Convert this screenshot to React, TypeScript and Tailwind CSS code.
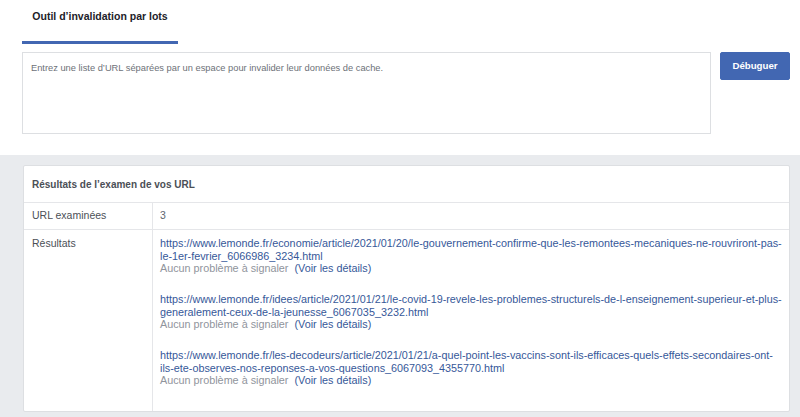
import React from "react"

const results = [
  {
    url: "https://www.lemonde.fr/economie/article/2021/01/20/le-gouvernement-confirme-que-les-remontees-mecaniques-ne-rouvriront-pas-le-1er-fevrier_6066986_3234.html",
  },
  {
    url: "https://www.lemonde.fr/idees/article/2021/01/21/le-covid-19-revele-les-problemes-structurels-de-l-enseignement-superieur-et-plus-generalement-ceux-de-la-jeunesse_6067035_3232.html",
  },
  {
    url: "https://www.lemonde.fr/les-decodeurs/article/2021/01/21/a-quel-point-les-vaccins-sont-ils-efficaces-quels-effets-secondaires-ont-ils-ete-observes-nos-reponses-a-vos-questions_6067093_4355770.html",
  },
]

export default function App() {
  return (
    <div className="min-h-[417px] bg-[#e9ebee] font-['Liberation_Sans',Arial,sans-serif] text-[10px]">
      {/* top tool */}
      <section className="h-[155px] bg-white">
        <div className="ml-[22px] w-[156px] h-[44px] border-b-[3px] border-[#4267b2] flex items-center justify-center pb-[7px]">
          <span className="text-[10.5px] font-bold text-[#1d2129]">Outil d’invalidation par lots</span>
        </div>
        <div className="flex items-start ml-[22px] mr-[10px] mt-[8px] gap-[9px]">
          <textarea
            className="w-[689px] h-[82px] border border-[#dddfe2] px-[8px] pt-[9px] text-[9.3px] leading-[12px] text-[#1d2129] placeholder:text-[#6d7178] resize-none outline-none"
            placeholder="Entrez une liste d’URL séparées par un espace pour invalider leur données de cache."
          />
          <button className="w-[70px] h-[28px] bg-[#4267b2] rounded-[2px] text-white font-bold text-[9.7px] border border-[#4267b2]">
            Débuguer
          </button>
        </div>
      </section>

      {/* results card */}
      <div className="pt-[10px] pb-[7px] pl-[23px] pr-[10px]">
        <div className="bg-white border border-[#dddfe2] rounded-[2px]">
          <div className="h-[37px] flex items-center px-[8px] border-b border-[#e5e6e9]">
            <span className="text-[10px] font-bold text-[#4b4f56]">Résultats de l’examen de vos URL</span>
          </div>
          <div className="flex h-[27px] border-b border-[#e5e6e9] text-[10.5px] text-[#4b4f56]">
            <div className="w-[129px] shrink-0 border-r border-[#e5e6e9] px-[8px] flex items-center">URL examinées</div>
            <div className="px-[7px] flex items-center text-[#606770]">3</div>
          </div>
          <div className="flex text-[10.8px]">
            <div className="w-[129px] shrink-0 border-r border-[#e5e6e9] px-[8px] pt-[7px] text-[10.5px] text-[#4b4f56] leading-[12.5px]">
              Résultats
            </div>
            <div className="flex-1 pl-[7px] pr-[6px] pt-[7px] pb-[6px] leading-[12.5px]">
              {results.map((r) => (
                <div key={r.url} className="mb-[18.5px]">
                  <a className="text-[#365899] block">{r.url}</a>
                  <div className="text-[#90949c]">
                    Aucun problème à signaler <span className="ml-[3px] text-[#365899]">(Voir les détails)</span>
                  </div>
                </div>
              ))}
            </div>
          </div>
        </div>
      </div>
    </div>
  )
}
